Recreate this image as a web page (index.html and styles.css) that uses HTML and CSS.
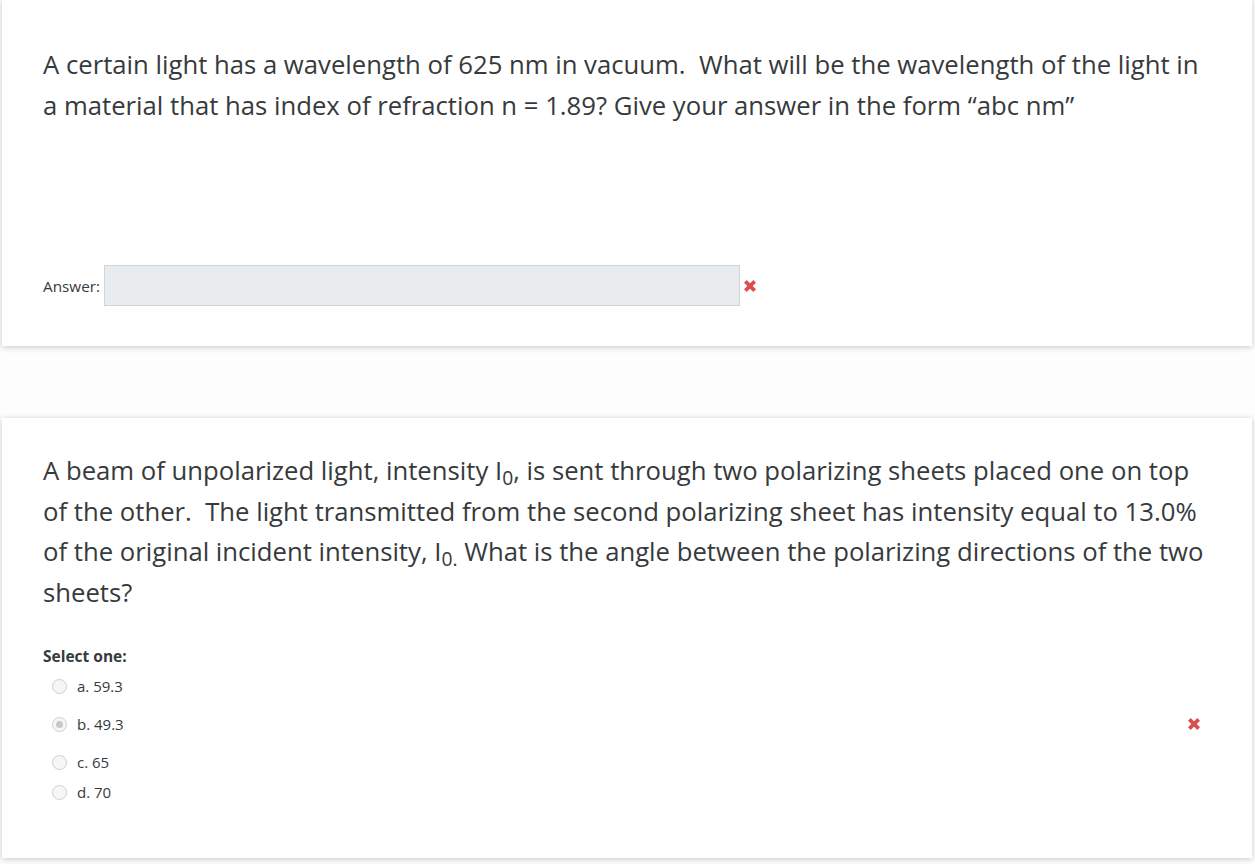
FILE: index.html
```html
<!DOCTYPE html>
<html lang="en">
<head>
    <meta charset="UTF-8">
    <meta name="viewport" content="width=device-width, initial-scale=1.0">
    <title>Quiz review</title>
    <link rel="stylesheet" href="styles.css">
</head>
<body>
    <div class="que first">
        <div class="qtext">
            <p>A certain light has a wavelength of 625 nm in vacuum.&nbsp; What will be the wavelength of the light in<br>
            a material that has index of refraction n = 1.89? Give your answer in the form “abc nm”</p>
        </div>
        <div class="ablock">
            <label class="answer-label">Answer:</label>
            <span class="answer-input"></span>
            <svg class="wrong" viewBox="0 0 12 12"><path d="M2 2 L10 10 M10 2 L2 10"/></svg>
        </div>
    </div>

    <div class="que second">
        <div class="qtext">
            <p>A beam of unpolarized light, intensity I<sub>0</sub>, is sent through two polarizing sheets placed one on top<br>
            of the other.&nbsp; The light transmitted from the second polarizing sheet has intensity equal to 13.0%<br>
            of the original incident intensity, I<sub>0.</sub> What is the angle between the polarizing directions of the two<br>
            sheets?</p>
        </div>
        <div class="prompt">Select one:</div>
        <div class="options">
            <div class="option"><span class="radio"></span><span>a. 59.3</span></div>
            <div class="option chosen"><span class="radio checked"></span><span>b. 49.3</span>
                <svg class="wrong right" viewBox="0 0 12 12"><path d="M2 2 L10 10 M10 2 L2 10"/></svg>
            </div>
            <div class="option"><span class="radio"></span><span>c. 65</span></div>
            <div class="option last"><span class="radio"></span><span>d. 70</span></div>
        </div>
    </div>
</body>
</html>
```

FILE: styles.css
```css
body, html {
    margin: 0;
    padding: 0;
}
body {
    background-color: #fdfdfd;
    font-family: "Open Sans", "Noto Sans", sans-serif;
    color: #373a3c;
    padding: 0 3px 8px 2px;
}
/* Tarjetas de pregunta */
.que {
    background-color: #fff;
    box-shadow: 0 1px 6px rgba(0, 0, 0, 0.22);
    padding: 0 41px 0 41px;
}
.que.first {
    padding-top: 45px;
    padding-bottom: 40px;
}
.que.second {
    margin-top: 72px;
    padding-top: 33px;
    padding-bottom: 56px;
}
.qtext p {
    margin: 0;
    font-size: 25.7px;
    line-height: 40.5px;
    white-space: nowrap;
}
.qtext sub {
    font-size: 0.75em;
    line-height: 0;
    vertical-align: -0.25em;
}
/* Bloque de respuesta */
.ablock {
    display: flex;
    align-items: center;
    margin-top: 139px;
}
.answer-label {
    font-size: 15.3px;
    margin-right: 4px;
}
.answer-input {
    display: block;
    width: 634px;
    height: 39px;
    background-color: #e9ecef;
    border: 1px solid #ced4da;
}
.wrong {
    width: 14px;
    height: 14px;
    margin-left: 3px;
}
.wrong path {
    stroke: #dc4e4e;
    stroke-width: 3.2;
    fill: none;
}
.wrong.right {
    margin-left: auto;
    margin-right: 10px;
}
/* Opciones */
.prompt {
    margin-top: 32px;
    font-size: 15.5px;
    font-weight: bold;
}
.options {
    padding-left: 9px;
    margin-top: 9px;
}
.option {
    display: flex;
    align-items: center;
    font-size: 15px;
    height: 20px;
    gap: 10px;
    margin-bottom: 18px;
}
.option:nth-child(3) {
    margin-bottom: 10px;
}
.option.last {
    margin-bottom: 0;
}
.radio {
    width: 13px;
    height: 13px;
    border: 1px solid #cfcfcf;
    border-radius: 50%;
    background-color: #f6f6f6;
    position: relative;
}
.radio.checked:after {
    content: '';
    position: absolute;
    left: 3px;
    top: 3px;
    width: 7px;
    height: 7px;
    border-radius: 50%;
    background-color: #c8c8c8;
}
```
